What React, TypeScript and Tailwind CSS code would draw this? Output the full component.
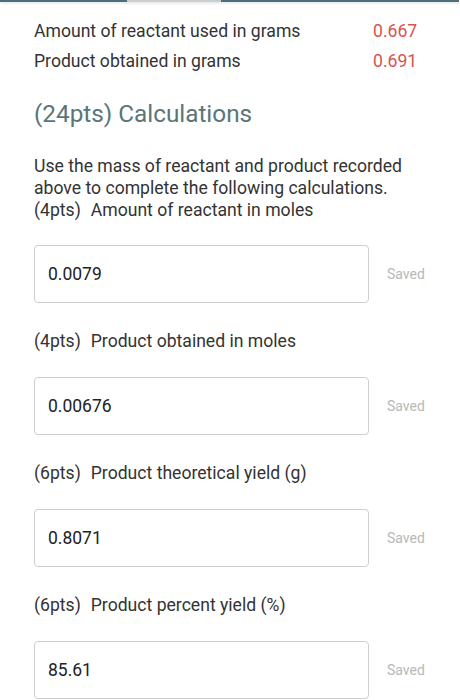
import React from "react";

const Field = ({ value }: { value: string }) => (
  <div className="flex items-center">
    <div className="w-[335px] h-[58px] border border-[#cfcfcf] rounded-[4px] flex items-center pl-[13px] text-[17.5px] text-[#222]">
      {value}
    </div>
    <div className="ml-[18px] text-[14px] text-[#b8b8b8]">Saved</div>
  </div>
);

const Label = ({ pts, text }: { pts: string; text: string }) => (
  <div className="h-[22px] leading-[22px] text-[17.6px] text-[#333]">
    <span className="mr-[10px]">{pts}</span>
    {text}
  </div>
);

export default function App() {
  return (
    <div className="w-[460px] h-[700px] bg-white overflow-hidden" style={{ fontFamily: "Roboto, 'Noto Sans', sans-serif" }}>
      <div className="flex h-[2px] shadow-[0_1px_3px_rgba(0,0,0,0.15)]">
        <div className="w-[127px] bg-[#4e6e7b]" />
        <div className="w-[94px] bg-[#c9cfd1]" />
        <div className="flex-1 bg-[#4e6e7b]" />
        <div className="w-[1px] bg-white" />
      </div>
      <div className="pl-[34px]">
        <div className="mt-[18px] flex h-[22px] leading-[22px] text-[17.6px] text-[#333]">
          <div className="w-[339px]">Amount of reactant used in grams</div>
          <div className="text-[#d9534f]">0.667</div>
        </div>
        <div className="mt-[8px] flex h-[22px] leading-[22px] text-[17.6px] text-[#333]">
          <div className="w-[339px]">Product obtained in grams</div>
          <div className="text-[#d9534f]">0.691</div>
        </div>
        <div className="mt-[28px] h-[28px] leading-[28px] text-[24.3px] text-[#5b7579]">(24pts) Calculations</div>
        <div className="mt-[27px] text-[17.6px] leading-[22px] text-[#333] w-[395px]">
          Use the mass of reactant and product recorded above to complete the following calculations.
        </div>
        <Label pts="(4pts)" text="Amount of reactant in moles" />
        <div className="mt-[24px]"><Field value="0.0079" /></div>
        <div className="mt-[27px]"><Label pts="(4pts)" text="Product obtained in moles" /></div>
        <div className="mt-[25px]"><Field value="0.00676" /></div>
        <div className="mt-[27px]"><Label pts="(6pts)" text="Product theoretical yield (g)" /></div>
        <div className="mt-[25px]"><Field value="0.8071" /></div>
        <div className="mt-[27px]"><Label pts="(6pts)" text="Product percent yield (%)" /></div>
        <div className="mt-[25px]"><Field value="85.61" /></div>
      </div>
    </div>
  );
}
